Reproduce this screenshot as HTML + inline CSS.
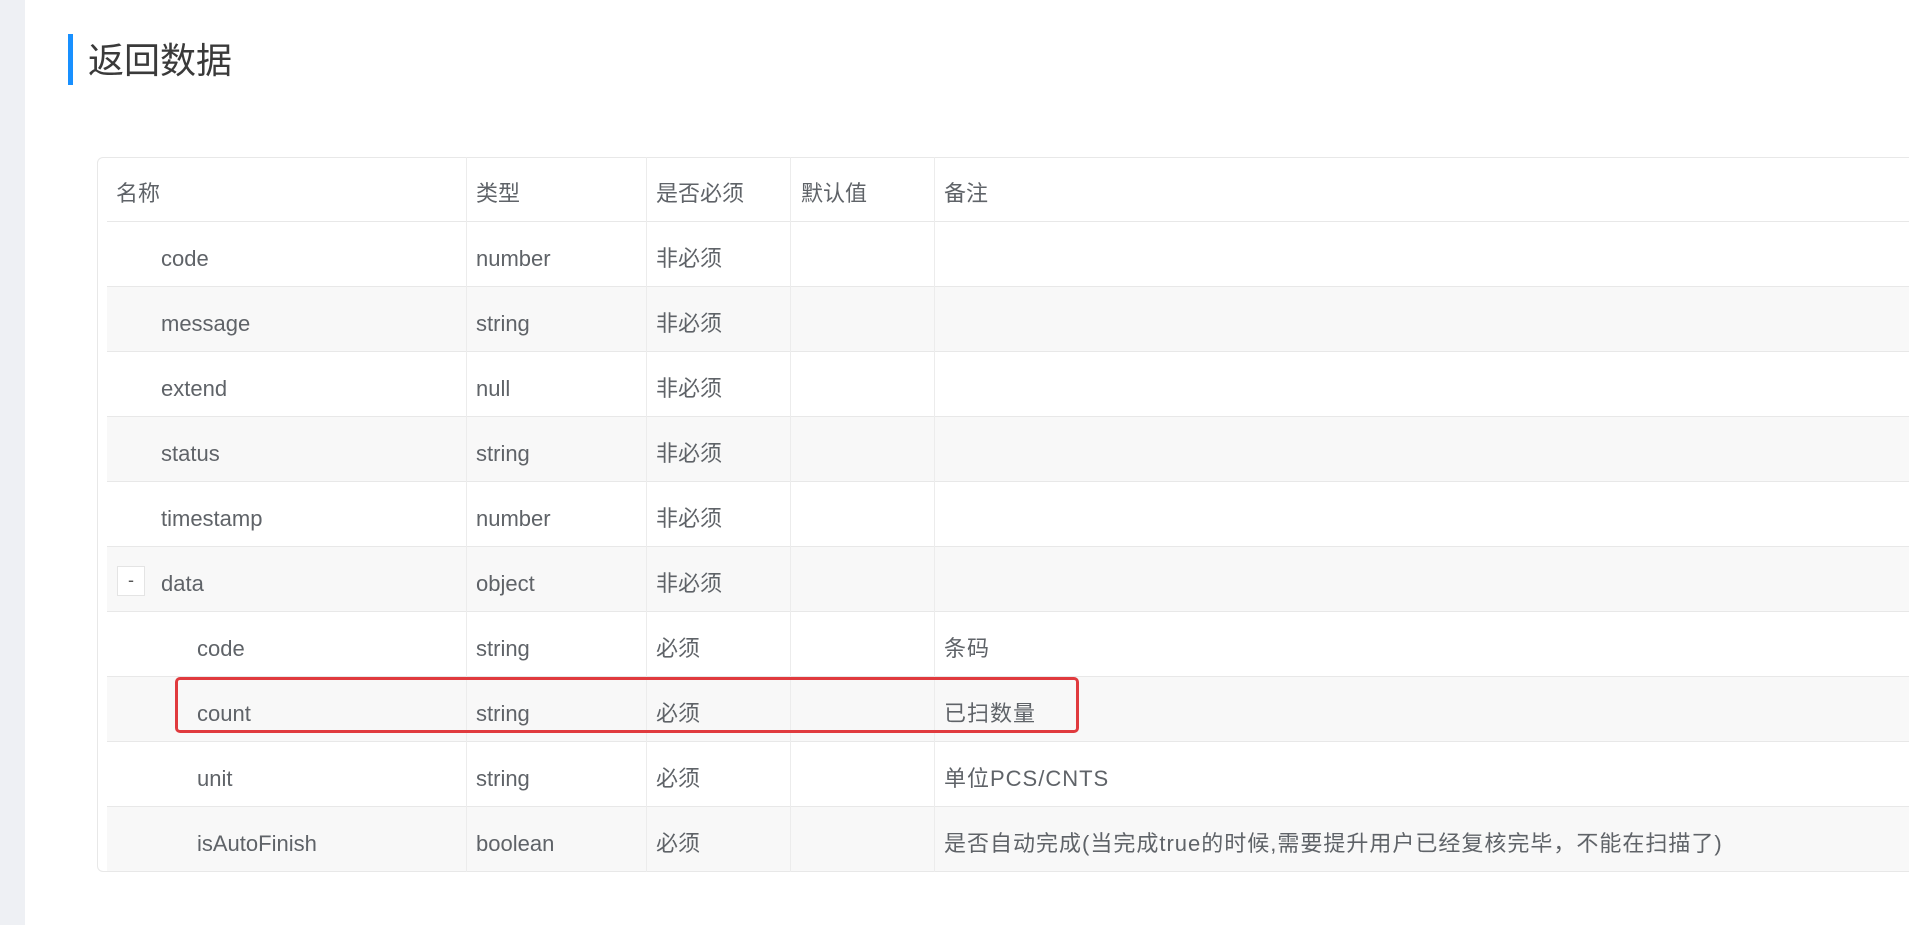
<!DOCTYPE html>
<html><head><meta charset="utf-8"><style>
html,body{margin:0;padding:0;width:1909px;height:925px;overflow:hidden;background:#fff;font-family:"Liberation Sans","Noto Sans CJK SC",sans-serif;}
.strip{position:absolute;left:0;top:0;width:25px;height:925px;background:#eef0f4;}
.bar{position:absolute;left:68px;top:34px;width:5px;height:51px;background:#1890ff;}
.title{position:absolute;left:88px;top:38px;font-size:36px;line-height:46px;color:#3a3a3a;}
.tbl{position:absolute;left:97px;top:157px;width:1830px;height:715px;border:1px solid #e8e8e8;border-radius:6px;box-sizing:border-box;}
.row{position:absolute;left:107px;width:1810px;height:65px;border-bottom:1px solid #e8e8e8;box-sizing:border-box;font-size:22px;color:#5f6368;}
.row.s{background:#f8f8f8;}
.row span{position:absolute;top:5px;line-height:64px;white-space:nowrap;}
.row span.n{letter-spacing:1px;}
.vl{position:absolute;top:157px;width:1px;height:715px;background:#ececec;}
.btn{position:absolute;left:117px;top:566px;width:28px;height:30px;border:1px solid #e4e4e4;background:#fff;box-sizing:border-box;font-size:18px;line-height:26px;text-align:center;color:#555;}
.red{position:absolute;left:175px;top:677px;width:904px;height:56px;border:3px solid #e03a3e;border-radius:5px;box-sizing:border-box;}
</style></head><body>
<div class="strip"></div>
<div class="bar"></div>
<div class="title">返回数据</div>
<div class="tbl"></div>

<div class="row" style="top:157px"><span style="left:9px">名称</span><span style="left:369px">类型</span><span style="left:549px">是否必须</span><span style="left:694px">默认值</span><span style="left:837px">备注</span></div>
<div class="row" style="top:222px"><span style="left:54px">code</span><span style="left:369px">number</span><span style="left:549px">非必须</span></div>
<div class="row s" style="top:287px"><span style="left:54px">message</span><span style="left:369px">string</span><span style="left:549px">非必须</span></div>
<div class="row" style="top:352px"><span style="left:54px">extend</span><span style="left:369px">null</span><span style="left:549px">非必须</span></div>
<div class="row s" style="top:417px"><span style="left:54px">status</span><span style="left:369px">string</span><span style="left:549px">非必须</span></div>
<div class="row" style="top:482px"><span style="left:54px">timestamp</span><span style="left:369px">number</span><span style="left:549px">非必须</span></div>
<div class="row s" style="top:547px"><span style="left:54px">data</span><span style="left:369px">object</span><span style="left:549px">非必须</span></div>
<div class="row" style="top:612px"><span style="left:90px">code</span><span style="left:369px">string</span><span style="left:549px">必须</span><span class="n" style="left:837px">条码</span></div>
<div class="row s" style="top:677px"><span style="left:90px">count</span><span style="left:369px">string</span><span style="left:549px">必须</span><span class="n" style="left:837px">已扫数量</span></div>
<div class="row" style="top:742px"><span style="left:90px">unit</span><span style="left:369px">string</span><span style="left:549px">必须</span><span class="n" style="left:837px">单位PCS/CNTS</span></div>
<div class="row s" style="top:807px"><span style="left:90px">isAutoFinish</span><span style="left:369px">boolean</span><span style="left:549px">必须</span><span class="n" style="left:837px">是否自动完成(当完成true的时候,需要提升用户已经复核完毕，不能在扫描了)</span></div>

<div class="vl" style="left:466px"></div>
<div class="vl" style="left:646px"></div>
<div class="vl" style="left:790px"></div>
<div class="vl" style="left:934px"></div>
<div class="btn">-</div>
<div class="red"></div>
</body></html>
